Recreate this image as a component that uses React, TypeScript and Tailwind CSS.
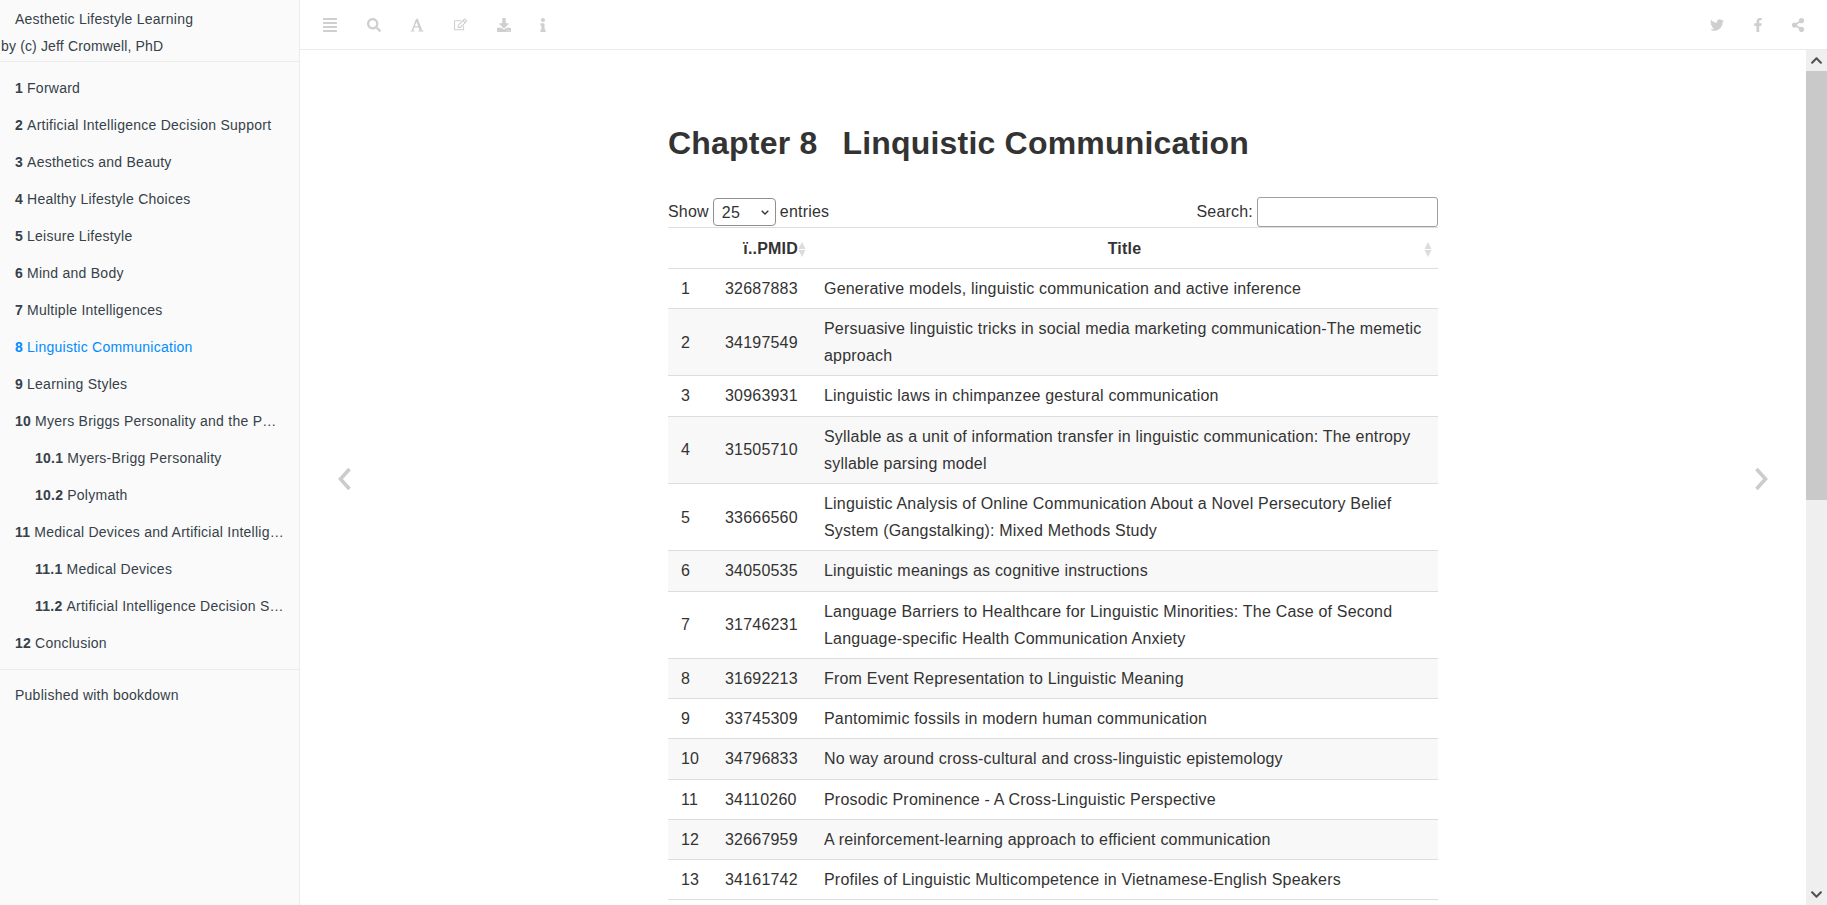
import { FaAlignJustify, FaSearch, FaRegEdit, FaDownload, FaInfo, FaTwitter, FaFacebookF, FaShareAlt, FaChevronUp, FaChevronDown } from "react-icons/fa";

interface TocItem {
  num: string;
  label: string;
  sub?: boolean;
  active?: boolean;
}

const toc: TocItem[] = [
  { num: "1", label: "Forward" },
  { num: "2", label: "Artificial Intelligence Decision Support" },
  { num: "3", label: "Aesthetics and Beauty" },
  { num: "4", label: "Healthy Lifestyle Choices" },
  { num: "5", label: "Leisure Lifestyle" },
  { num: "6", label: "Mind and Body" },
  { num: "7", label: "Multiple Intelligences" },
  { num: "8", label: "Linguistic Communication", active: true },
  { num: "9", label: "Learning Styles" },
  { num: "10", label: "Myers Briggs Personality and the Polymath" },
  { num: "10.1", label: "Myers-Brigg Personality", sub: true },
  { num: "10.2", label: "Polymath", sub: true },
  { num: "11", label: "Medical Devices and Artificial Intelligence" },
  { num: "11.1", label: "Medical Devices", sub: true },
  { num: "11.2", label: "Artificial Intelligence Decision Support", sub: true },
  { num: "12", label: "Conclusion" },
];

const rows = [
  ["32687883", "Generative models, linguistic communication and active inference"],
  ["34197549", "Persuasive linguistic tricks in social media marketing communication-The memetic approach"],
  ["30963931", "Linguistic laws in chimpanzee gestural communication"],
  ["31505710", "Syllable as a unit of information transfer in linguistic communication: The entropy syllable parsing model"],
  ["33666560", "Linguistic Analysis of Online Communication About a Novel Persecutory Belief System (Gangstalking): Mixed Methods Study"],
  ["34050535", "Linguistic meanings as cognitive instructions"],
  ["31746231", "Language Barriers to Healthcare for Linguistic Minorities: The Case of Second Language-specific Health Communication Anxiety"],
  ["31692213", "From Event Representation to Linguistic Meaning"],
  ["33745309", "Pantomimic fossils in modern human communication"],
  ["34796833", "No way around cross-cultural and cross-linguistic epistemology"],
  ["34110260", "Prosodic Prominence - A Cross-Linguistic Perspective"],
  ["32667959", "A reinforcement-learning approach to efficient communication"],
  ["34161742", "Profiles of Linguistic Multicompetence in Vietnamese-English Speakers"],
];

function SortArrows({ right }: { right: string }) {
  return (
    <svg viewBox="0 0 8 15" className={`absolute top-[14px] w-[8px] h-[15px] fill-[#dcdcdc] ${right}`}>
      <path d="M4 0 L7.5 7 H0.5 Z" />
      <path d="M4 15 L7.5 8 H0.5 Z" />
    </svg>
  );
}

// the serif "A" of the font-settings button
function SerifA() {
  return (
    <svg viewBox="0 0 14 14" className="w-[14px] h-[14px] fill-current">
      <path
        fillRule="evenodd"
        d="M0.5 13.5 V12.7 L1.7 12.4 L6 0.8 H7.8 L12.3 12.4 L13.5 12.7 V13.5 H8.3 V12.7 L9.6 12.4 L8.7 9.6 H4.3 L3.3 12.4 L4.6 12.7 V13.5 Z M4.8 8.3 H8.2 L6.5 3.7 Z"
      />
    </svg>
  );
}

function Sidebar() {
  return (
    <aside className="w-[300px] shrink-0 h-full bg-[#fafafa] border-r border-[#ebebeb] text-[14px] leading-[17px] tracking-[0.25px] text-[#364149]">
      <div className="pt-[11px] border-b border-[#ebebeb] h-[62px]">
        <div className="pl-[15px] h-[17px]">Aesthetic Lifestyle Learning</div>
        <div className="pl-[1px] mt-[10px] h-[17px] tracking-[0.15px]">by (c) Jeff Cromwell, PhD</div>
      </div>
      <ul className="pt-[8px] pb-[7px] border-b border-[#ebebeb]">
        {toc.map((item) => (
          <li
            key={item.num}
            className={`py-[10px] pr-[15px] truncate ${item.sub ? "pl-[35px]" : "pl-[15px]"} ${item.active ? "text-[#008cff]" : ""}`}
          >
            <b className="mr-[4px]">{item.num}</b>
            {item.label}
          </li>
        ))}
      </ul>
      <div className="pt-[17px] pl-[15px]">Published with bookdown</div>
    </aside>
  );
}

function Header() {
  return (
    <header className="h-[50px] shrink-0 border-b border-[#ebebeb] flex items-center justify-between px-[8px] text-[#cfcfcf] text-[14px]">
      <div className="flex items-center">
        <span className="w-[44px] h-[49px] flex items-center justify-center"><FaAlignJustify size={16} /></span>
        <span className="w-[43px] h-[49px] flex items-center justify-center"><FaSearch /></span>
        <span className="w-[43px] h-[49px] flex items-center justify-center"><SerifA /></span>
        <span className="w-[44px] h-[49px] flex items-center justify-center"><FaRegEdit size={13} /></span>
        <span className="w-[43px] h-[49px] flex items-center justify-center"><FaDownload /></span>
        <span className="w-[36px] h-[49px] flex items-center justify-center"><FaInfo /></span>
      </div>
      <div className="flex items-center">
        <span className="w-[41px] h-[49px] flex items-center justify-center"><FaTwitter /></span>
        <span className="w-[41px] h-[49px] flex items-center justify-center"><FaFacebookF /></span>
        <span className="w-[41px] h-[49px] pr-[2px] flex items-center justify-center"><FaShareAlt /></span>
      </div>
    </header>
  );
}

function Scrollbar() {
  return (
    <div className="w-[21px] shrink-0 h-full bg-[#efefef] flex flex-col items-stretch text-[#505050] text-[13px]">
      <div className="h-[21px] flex items-center justify-center">
        <FaChevronUp />
      </div>
      <div className="h-[429px] bg-[#c9c9c9]"></div>
      <div className="flex-1"></div>
      <div className="h-[21px] flex items-center justify-center">
        <FaChevronDown />
      </div>
    </div>
  );
}

function PageArrow({ points }: { points: string }) {
  return (
    <svg viewBox="0 0 14 24" className="w-[14px] h-[24px] fill-none stroke-[#cccccc] stroke-[3.6]">
      <polyline points={points} />
    </svg>
  );
}

export default function App() {
  return (
    <div className="h-screen flex overflow-hidden bg-white font-['Liberation_Sans',Arial,sans-serif]">
      <Sidebar />
      <div className="flex-1 min-w-0 flex flex-col h-full">
        <Header />
        <div className="flex-1 min-h-0 flex">
          <main className="relative flex-1 min-w-0 overflow-hidden">
            <div className="absolute left-0 top-[3px] bottom-0 w-[90px] flex items-center justify-center">
              <PageArrow points="11.5,2 2.5,12 11.5,22" />
            </div>
            <div className="absolute right-0 top-[3px] bottom-0 w-[90px] flex items-center justify-center">
              <PageArrow points="2.5,2 11.5,12 2.5,22" />
            </div>
            <div className="w-[770px] ml-[368px] pt-[73px] text-[16px] leading-[27.2px] tracking-[0.2px] text-[#333333]">
              <h1 className="text-[32px] leading-[41px] font-bold mb-[33px]">
                <span className="mr-[25px]">Chapter 8</span>
                Linquistic Communication
              </h1>
              <div className="flex items-center justify-between h-[30px]">
                <label className="flex items-center gap-[4px]">
                  Show
                  <span className="relative">
                    <select defaultValue="25" className="block appearance-none w-[63px] h-[28px] bg-white border border-[#8f8f8f] rounded-[4px] pl-[8px] text-[16px]">
                      <option value="25">25</option>
                    </select>
                    <svg viewBox="0 0 8 5" className="absolute right-[7px] top-[12px] w-[8px] h-[5px] fill-none stroke-[#333333] stroke-[1.3] pointer-events-none">
                      <polyline points="0.7,0.7 4,4 7.3,0.7" />
                    </svg>
                  </span>
                  entries
                </label>
                <label className="flex items-center gap-[4px]">
                  Search:
                  <input className="w-[181px] h-[30px] border border-[#a0a0a0] rounded-[3px] bg-white" />
                </label>
              </div>
              <table className="w-[770px] table-fixed border-collapse">
                <colgroup>
                  <col className="w-[46px]" />
                  <col className="w-[97px]" />
                  <col />
                </colgroup>
                <thead>
                  <tr className="border-y border-[#dddddd]">
                    <th></th>
                    <th className="relative pt-[7px] pb-[5.5px] px-[13px] text-right font-bold">
                      ï..PMID
                      <SortArrows right="right-[5px]" />
                    </th>
                    <th className="relative pt-[7px] pb-[5.5px] px-[13px] text-center font-bold">
                      Title
                      <SortArrows right="right-[6px]" />
                    </th>
                  </tr>
                </thead>
                <tbody>
                  {rows.map(([pmid, title], i) => (
                    <tr key={pmid} className={`border-b border-[#dddddd] ${i % 2 === 1 ? "bg-[#f8f8f8]" : ""}`}>
                      <td className="py-[6px] px-[13px]">{i + 1}</td>
                      <td className="py-[6px] pl-[11px] pr-[15px] text-right">{pmid}</td>
                      <td className="py-[6px] px-[13px]">{title}</td>
                    </tr>
                  ))}
                </tbody>
              </table>
            </div>
          </main>
          <Scrollbar />
        </div>
      </div>
    </div>
  );
}
